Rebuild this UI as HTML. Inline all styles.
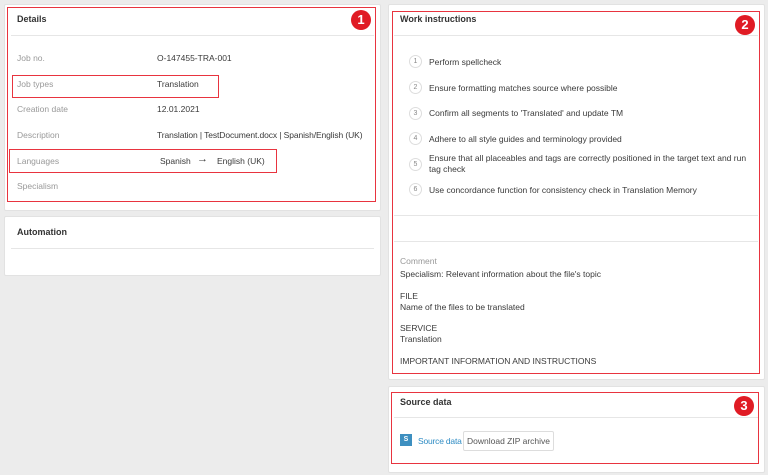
<!DOCTYPE html><html><head><style>
body{margin:0;width:768px;height:475px;background:#ececec;font-family:"Liberation Sans",sans-serif;font-size:8.5px;color:#3a3a3a;position:relative;overflow:hidden}
.a{position:absolute;white-space:nowrap}
.card{position:absolute;background:#fff;border:1px solid #e2e2e2;border-radius:2px}
.rb{position:absolute;border:1.5px solid #e8343f}
.hr{position:absolute;height:1px;background:#e6e6e6}
.h{font-weight:bold;color:#333;font-size:9px}
.l{color:#999}
.badge{position:absolute;width:20px;height:20px;border-radius:50%;background:#e01b24;color:#fff;font-weight:bold;font-size:13px;text-align:center;line-height:20px}
.c{position:absolute;width:11px;height:11px;border:1px solid #ddd;border-radius:50%;font-size:7px;color:#888;text-align:center;line-height:11px;left:409px}
</style></head><body>
<div class="card" style="left:4px;top:4px;width:375px;height:205px"></div>
<div class="card" style="left:4px;top:216px;width:375px;height:58px"></div>
<div class="card" style="left:388px;top:4px;width:375px;height:374px"></div>
<div class="card" style="left:388px;top:386px;width:375px;height:85px"></div>

<div class="a h" style="left:17px;top:14px">Details</div>
<div class="hr" style="left:11px;top:35px;width:363px"></div>
<div class="a l" style="left:17px;top:53px">Job no.</div><div class="a" style="left:157px;top:53px">O-147455-TRA-001</div>
<div class="a l" style="left:17px;top:79px">Job types</div><div class="a" style="left:157px;top:79px">Translation</div>
<div class="a l" style="left:17px;top:104px">Creation date</div><div class="a" style="left:157px;top:104px">12.01.2021</div>
<div class="a l" style="left:17px;top:130px">Description</div><div class="a" style="left:157px;top:130px;letter-spacing:-0.1px">Translation | TestDocument.docx | Spanish/English (UK)</div>
<div class="a l" style="left:17px;top:156px">Languages</div><div class="a" style="left:160px;top:156px">Spanish</div><div class="a" style="left:197px;top:153px;font-size:11px;font-weight:bold">→</div><div class="a" style="left:217px;top:156px">English (UK)</div>
<div class="a l" style="left:17px;top:181px">Specialism</div>
<div class="rb" style="left:7px;top:7px;width:367px;height:193px"></div>
<div class="rb" style="left:12px;top:75px;width:205px;height:21px"></div>
<div class="rb" style="left:9px;top:149px;width:266px;height:22px"></div>
<div class="badge" style="left:351px;top:10px">1</div>

<div class="a h" style="left:17px;top:227px">Automation</div>
<div class="hr" style="left:11px;top:248px;width:363px"></div>

<div class="a h" style="left:400px;top:14px">Work instructions</div>
<div class="hr" style="left:394px;top:35px;width:364px"></div>
<div class="c" style="top:55px">1</div><div class="a" style="left:429px;top:57px">Perform spellcheck</div>
<div class="c" style="top:81px">2</div><div class="a" style="left:429px;top:83px">Ensure formatting matches source where possible</div>
<div class="c" style="top:107px">3</div><div class="a" style="left:429px;top:108px">Confirm all segments to 'Translated' and update TM</div>
<div class="c" style="top:132px">4</div><div class="a" style="left:429px;top:134px">Adhere to all style guides and terminology provided</div>
<div class="c" style="top:158px">5</div><div class="a" style="left:429px;top:153px;line-height:11px">Ensure that all placeables and tags are correctly positioned in the target text and run<br>tag check</div>
<div class="c" style="top:183px">6</div><div class="a" style="left:429px;top:185px">Use concordance function for consistency check in Translation Memory</div>
<div class="hr" style="left:394px;top:215px;width:364px"></div>
<div class="hr" style="left:394px;top:241px;width:364px"></div>
<div class="a l" style="left:400px;top:256px">Comment</div>
<div class="a" style="left:400px;top:269px">Specialism: Relevant information about the file's topic</div>
<div class="a" style="left:400px;top:291px;line-height:11px">FILE<br>Name of the files to be translated</div>
<div class="a" style="left:400px;top:323px;line-height:11px">SERVICE<br>Translation</div>
<div class="a" style="left:400px;top:356px">IMPORTANT INFORMATION AND INSTRUCTIONS</div>
<div class="rb" style="left:392px;top:11px;width:366px;height:361px"></div>
<div class="badge" style="left:735px;top:15px">2</div>

<div class="a h" style="left:400px;top:397px">Source data</div>
<div class="hr" style="left:394px;top:417px;width:364px"></div>
<div class="a" style="left:400px;top:434px;width:12px;height:12px;background:#3d8fc0;color:#fff;font-size:7px;text-align:center;line-height:12px;font-weight:bold">S</div>
<div class="a" style="left:418px;top:436px;color:#2f8cc4;letter-spacing:-0.2px">Source data</div>
<div class="a" style="left:463px;top:431px;width:89px;height:18px;border:1px solid #ddd;border-radius:2px;line-height:18px;text-align:center;color:#555">Download ZIP archive</div>
<div class="rb" style="left:391px;top:392px;width:366px;height:70px"></div>
<div class="badge" style="left:734px;top:396px">3</div>
</body></html>
